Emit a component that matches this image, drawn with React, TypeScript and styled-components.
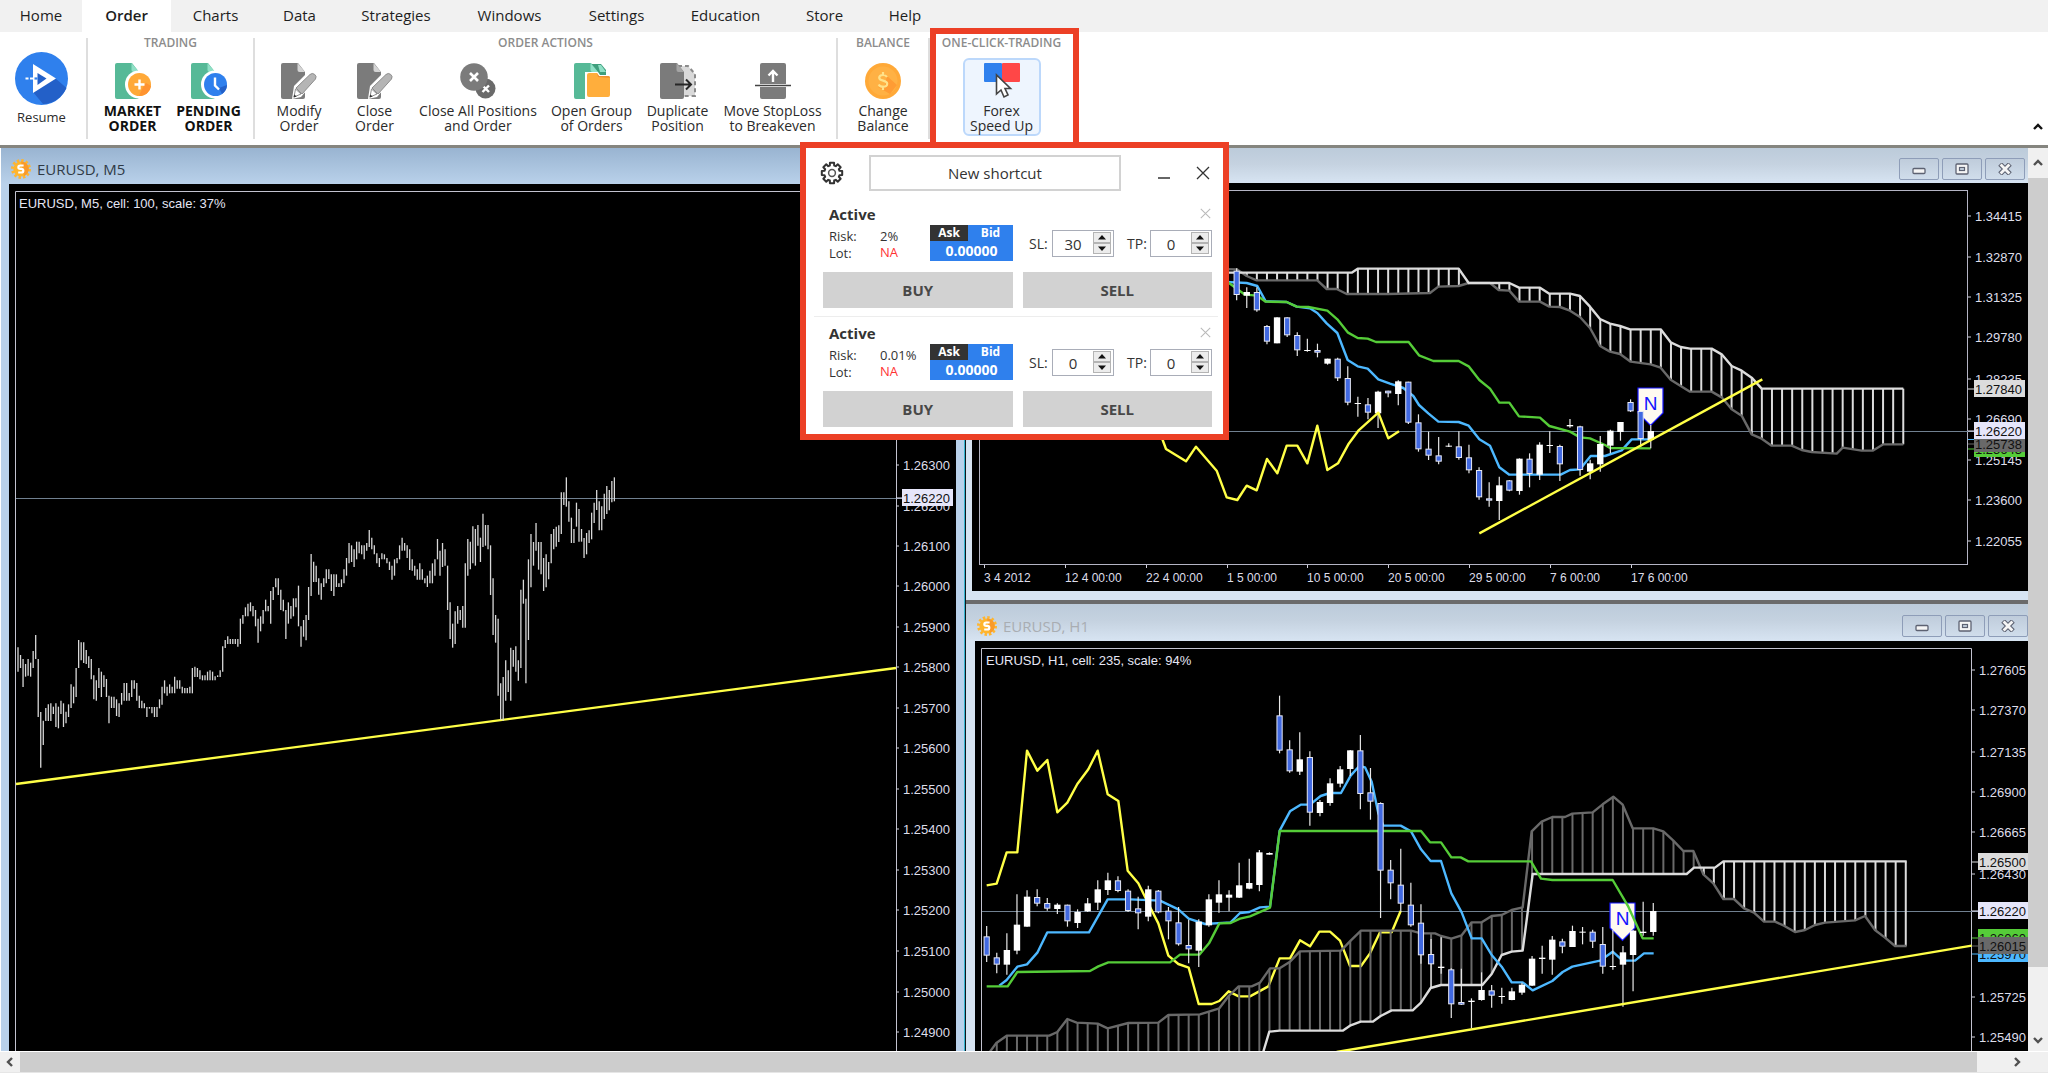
import React from "react";
import styled, { createGlobalStyle, css } from "styled-components";

const UI_FONT = '"Open Sans", "Noto Sans", sans-serif';
const CHART_FONT = '"Liberation Sans", Arial, sans-serif';
const RED = "#ec4026";

const GlobalStyle = createGlobalStyle`
  *, *::before, *::after { box-sizing: border-box; }
  html, body, #root { height: 100%; }
  body { margin: 0; overflow: hidden; background: #fff; font-family: ${UI_FONT}; color: #1e1e1e; }
  button, input { font-family: inherit; }
  button { margin: 0; padding: 0; border: 0; background: none; color: inherit; cursor: pointer; }
`;

/* ---------- shell ---------- */

const Shell = styled.div`
  position: relative;
  display: flex;
  flex-direction: column;
  height: 100vh;
  min-height: 600px;
`;

const TabBar = styled.nav`
  display: flex;
  flex: none;
  height: 32px;
  background: #f1f1f1;
`;

const Tab = styled.a<{ $width: number; $active?: boolean }>`
  flex: none;
  width: ${(p) => p.$width}px;
  line-height: 31px;
  text-align: center;
  font-size: 15px;
  font-weight: ${(p) => (p.$active ? 600 : 400)};
  background: ${(p) => (p.$active ? "#fff" : "transparent")};
  color: #1e1e1e;
  text-decoration: none;
`;

const Ribbon = styled.div`
  display: flex;
  flex: none;
  height: 116px;
  background: #fff;
  border-bottom: 3px solid #85857f;
`;

const Separator = styled.div`
  flex: none;
  width: 2px;
  margin: 6px 0;
  background: #dedede;
`;

const Group = styled.section<{ $width: number }>`
  position: relative;
  flex: none;
  display: flex;
  flex-direction: column;
  width: ${(p) => p.$width}px;
`;

const GroupTitle = styled.h2`
  margin: 0;
  height: 26px;
  padding-top: 2px;
  line-height: 17px;
  text-align: center;
  font-size: 12px;
  font-weight: 600;
  color: #8c8c8c;
  white-space: nowrap;
`;

const GroupBody = styled.div`
  display: flex;
  justify-content: center;
`;

const Tool = styled.button<{ $width: number; $bold?: boolean; $selected?: boolean }>`
  display: flex;
  flex-direction: column;
  align-items: center;
  gap: 4px;
  width: ${(p) => p.$width}px;
  height: 78px;
  padding-top: 4px;
  border: 1px solid transparent;
  font-size: 14px;
  font-weight: ${(p) => (p.$bold ? 700 : 400)};
  line-height: 15px;
  white-space: pre;
  color: ${(p) => (p.$bold ? "#111" : "#2b2b2b")};
  ${(p) =>
    p.$selected &&
    css`
      background: #eef5fe;
      border: 2px solid #bcd8fb;
      border-radius: 6px;
      padding-top: 3px;
    `}
`;

const ResumeTool = styled.button`
  display: flex;
  flex-direction: column;
  align-items: center;
  gap: 4px;
  width: 83px;
  padding-top: 20px;
  font-size: 13px;
  line-height: 17px;
  color: #2b2b2b;
`;

const ToolFrame = styled.div`
  position: absolute;
  inset: -4px -6px -3px 0;
  border: 6px solid ${RED};
  pointer-events: none;
`;

const RibbonEnd = styled.div`
  flex: 1;
  display: flex;
  justify-content: flex-end;
  align-items: flex-end;
  padding: 0 4px 12px 0;
`;

/* ---------- workspace ---------- */

const Workspace = styled.main`
  flex: 1;
  min-height: 0;
  display: grid;
  grid-template-columns: minmax(0, 966fr) minmax(0, 1062fr) 20px;
  grid-template-rows: minmax(0, 1fr) 21px;
  background: #f0f0f0;
`;

const RightStack = styled.div`
  display: grid;
  grid-template-rows: minmax(0, 456fr) minmax(0, 447fr);
  min-width: 0;
`;

const MdiWindow = styled.section<{ $kind: "active" | "top" | "bottom" }>`
  display: flex;
  flex-direction: column;
  min-width: 0;
  min-height: 0;
  background: ${(p) => (p.$kind === "active" ? "#b9d1ea" : "#d7e4f2")};
  ${(p) =>
    p.$kind === "active" &&
    css`
      border-left: 1px solid #fff;
      border-right: 1px solid #10181c;
      box-shadow: inset -1px 0 #35b4cf;
      padding-right: 9px;
      padding-left: 8px;
    `}
  ${(p) =>
    p.$kind === "top" &&
    css`
      border-bottom: 4px solid #6b6b6b;
      padding: 0 0 9px 6px;
    `}
  ${(p) =>
    p.$kind === "bottom" &&
    css`
      padding-left: 9px;
    `}
`;

const TITLE_INSETS = {
  active: { margin: "0 -8px 0 -8px", padding: "6px 12px 0 10px" },
  top: { margin: "0 0 0 -6px", padding: "6px 3px 0 11px" },
  bottom: { margin: "0 0 0 -9px", padding: "6px 0 0 11px" },
};

const TitleBar = styled.header<{ $kind: "active" | "top" | "bottom"; $height: number }>`
  flex: none;
  display: flex;
  align-items: center;
  gap: 6px;
  height: ${(p) => p.$height}px;
  margin: ${(p) => TITLE_INSETS[p.$kind].margin};
  padding: ${(p) => TITLE_INSETS[p.$kind].padding};
  background: ${(p) =>
    p.$kind === "active"
      ? "linear-gradient(#99b4d1, #b9d1ea)"
      : "linear-gradient(#bccbda, #c5d2e0 45%, #d7e4f2)"};
  font-size: 15px;
  line-height: 20px;
  color: ${(p) => (p.$kind === "active" ? "#2f3a46" : "#a9adb2")};
`;

const Caption = styled.h3`
  flex: 1;
  margin: 0;
  font: inherit;
  white-space: nowrap;
`;

const CaptionButtons = styled.div`
  display: flex;
  gap: 3px;
`;

const CaptionButton = styled.button`
  display: grid;
  place-items: center;
  width: 40px;
  height: 22px;
  border: 1px solid #8e9db8;
  border-radius: 2px;
  background: linear-gradient(#bfccdb, #d0ddeb);
`;

const ChartArea = styled.div`
  flex: 1;
  min-height: 0;
  background: #000;
  overflow: hidden;

  svg {
    display: block;
    width: 100%;
    height: 100%;
  }
`;

const ScrollColumn = styled.div`
  display: flex;
  flex-direction: column;
  background: #f0f0f0;
`;

const ScrollRow = styled.div`
  grid-column: 1 / -1;
  display: flex;
  background: #f0f0f0;
  border-top: 1px solid #fff;
`;

const ScrollButton = styled.button<{ $w: number; $h: number }>`
  flex: none;
  display: grid;
  place-items: center;
  width: ${(p) => p.$w}px;
  height: ${(p) => p.$h}px;
`;

const Thumb = styled.div<{ $grow: number }>`
  flex: ${(p) => p.$grow} 1 0;
  background: #cdcdcd;
`;

const Track = styled.div<{ $grow: number }>`
  flex: ${(p) => p.$grow} 1 0;
`;

const StatusStrip = styled.footer`
  flex: none;
  height: 4px;
  background: #fff;
  border-top: 1px solid #e6e6e6;
`;

/* ---------- one click panel ---------- */

const Panel = styled.aside`
  position: absolute;
  left: 800px;
  top: 142px;
  width: 429px;
  border: 6px solid ${RED};
  background: #fff;
  color: #333;
`;

const PanelHead = styled.div`
  display: flex;
  align-items: center;
  height: 49px;
  padding: 0 13px 0 14px;
`;

const IconButton = styled.button<{ $size: number }>`
  display: grid;
  place-items: center;
  width: ${(p) => p.$size}px;
  height: ${(p) => p.$size}px;
`;

const NewShortcut = styled.button`
  width: 252px;
  height: 36px;
  margin: 0 36px 0 25px;
  border: 2px solid #d2d2d2;
  font-size: 15px;
`;

const HeadSpacer = styled.div`
  flex: 1;
`;

const Shortcut = styled.section`
  height: 119px;
  padding: 6px 11px 0 17px;

  & + & {
    position: relative;
    height: 118px;
  }
  & + &::before {
    content: "";
    position: absolute;
    inset: 0 5px auto 8px;
    border-top: 1px solid #ededed;
  }
`;

const ShortcutHead = styled.div`
  display: flex;
  justify-content: space-between;
  height: 22px;
  padding-left: 6px;
`;

const RemoveButton = styled(IconButton)`
  margin-top: 4px;
`;

const ShortcutName = styled.h4`
  margin: 0;
  font-size: 15px;
  font-weight: 700;
  line-height: 22px;
`;

const ShortcutInfo = styled.div`
  display: flex;
  height: 36px;
  padding-left: 6px;
`;

const Facts = styled.dl`
  display: grid;
  grid-template-columns: 51px 50px;
  grid-template-rows: 17px 17px;
  margin: 3px 0 0;
  font-size: 13px;
  line-height: 17px;

  dt,
  dd {
    margin: 0;
    white-space: nowrap;
  }
`;

const Missing = styled.dd`
  color: #f33;
  line-height: 14px;
`;

const Quote = styled.div`
  display: grid;
  grid-template-columns: 38px 45px;
  grid-template-rows: 16px 20px;
  width: 83px;
  height: 36px;
  margin-right: 3px;
  background: #2f80ed;
  color: #fff;
  text-align: center;
  font-weight: 700;
`;

const QuoteSide = styled.button<{ $dark?: boolean }>`
  font-size: 12px;
  font-weight: 700;
  line-height: 16px;
  background: ${(p) => (p.$dark ? "#333" : "transparent")};
`;

const QuotePrice = styled.output`
  grid-column: 1 / -1;
  font-size: 14px;
  line-height: 19px;
`;

const Field = styled.div`
  display: flex;
  align-items: center;
  gap: 2px;
  margin-left: 13px;
  padding: 5px 0 4px;
`;

const FieldLabel = styled.label`
  width: 21px;
  font-size: 14px;
  white-space: nowrap;
`;

const Stepper = styled.div`
  display: flex;
  width: 62px;
  height: 27px;
  padding: 1px 2px 1px 0;
  border: 1px solid #a9adb8;
`;

const StepInput = styled.input`
  flex: 1;
  min-width: 0;
  padding: 0;
  border: 0;
  outline: 0;
  text-align: center;
  font-size: 15px;
  color: #333;
`;

const StepButtons = styled.div`
  display: grid;
  grid-template-rows: 1fr 1fr;
  width: 18px;
  height: 22px;
`;

const StepButton = styled.button`
  display: grid;
  place-items: center;
  border: 1px solid #b4b4b4;
  background: #ececec;
`;

const TradeRow = styled.div`
  display: grid;
  grid-template-columns: 1fr 1fr;
  gap: 10px;
  margin-top: 11px;
`;

const TradeButton = styled.button`
  height: 36px;
  background: #d2d2d2;
  font-size: 15px;
  font-weight: 700;
  color: #484848;
`;

/* ---------- icons ---------- */

const PlayIcon = () => (
  <svg width="53" height="53" viewBox="0 0 53 53">
    <circle cx="26.500" cy="26.500" r="26.500" fill="#2f80ed" />
    <path d="M18 40 L28 52 A26.500 26.500 0 0 0 51.500 36 L40 26Z" fill="#2360c8" />
    <path d="M18 12 L41 26.500 L18 41Z" fill="#fff" />
    <path d="M22.500 21 L31.500 26.500 L22.500 33Z" fill="#2360c8" />
    <path d="M10.500 26.500h3M15 26.500h3" stroke="#fff" strokeWidth="2.200" />
    <path d="M19.500 26.500h3" stroke="#2f80ed" strokeWidth="2.200" />
  </svg>
);

const DocBase = ({ fill, fold }: { fill: string; fold: string }) => (
  <>
    <path d="M2 0h15l7 9v25a2 2 0 0 1-2 2H2a2 2 0 0 1-2-2V2a2 2 0 0 1 2-2Z" fill={fill} />
    <path d="M16.500 0v7a2 2 0 0 0 2 2H24Z" fill={fold} />
  </>
);

const MarketIcon = () => (
  <svg width="36" height="36" viewBox="0 0 36 36">
    <DocBase fill="#56b997" fold="#8fe0c6" />
    <circle cx="24" cy="21.500" r="14" fill="#fff" />
    <circle cx="24.500" cy="21.500" r="11.500" fill="#ffa938" />
    <path d="M28 24l-4 9a11.500 11.500 0 0 0 12-10l-5-3Z" fill="#ff9330" />
    <path d="M24.500 16.500v10M19.500 21.500h10" stroke="#fff" strokeWidth="2.400" />
  </svg>
);

const PendingIcon = () => (
  <svg width="36" height="36" viewBox="0 0 36 36">
    <DocBase fill="#56b997" fold="#8fe0c6" />
    <circle cx="24" cy="21.500" r="14" fill="#fff" />
    <circle cx="24.500" cy="21.500" r="11.500" fill="#2f80ed" />
    <path d="M28 25l3 6a11.500 11.500 0 0 0 5-9Z" fill="#2360c8" />
    <path d="M24 14.500v8l4 4" stroke="#fff" strokeWidth="2.400" fill="none" />
  </svg>
);

const EditIcon = () => (
  <svg width="36" height="36" viewBox="0 0 36 36">
    <DocBase fill="#7b7b7b" fold="#d4d4d4" />
    <path d="M11 36l2-13 15-15 8 7-16 19Z" fill="#fff" />
    <path d="M15 25L29 11.500a3.600 3.600 0 0 1 5.500 4.500L21 31Z" fill="#b5b5b5" stroke="#8d8d8d" />
    <path d="M14.500 26l5.500 5-7 3Z" fill="#fff" stroke="#8d8d8d" />
    <path d="M12.500 34.500l.8-3 2.400 2Z" fill="#333" />
  </svg>
);

const CloseAllIcon = () => (
  <svg width="36" height="36" viewBox="0 0 36 36">
    <circle cx="25.500" cy="25.500" r="10" fill="#6a6a6a" />
    <path d="M22.500 22.500l6.500 6.500M29 22.500l-6.500 6.500" stroke="#fff" strokeWidth="2.400" />
    <circle cx="14" cy="14" r="13.800" fill="#7b7b7b" />
    <path d="M10 10l8 8M18 10l-8 8" stroke="#fff" strokeWidth="2.600" />
  </svg>
);

const GroupIcon = () => (
  <svg width="36" height="36" viewBox="0 0 36 36">
    <path d="M18 1h9l5 6v7H18Z" fill="#3f9f7d" />
    <DocBase fill="#56b997" fold="#8fe0c6" />
    <path d="M24 2h3l5 7h-6Z" fill="#8fe0c6" />
    <path d="M11 36V9h13l2 3h10v24Z" fill="#fff" />
    <path d="M13 12a2 2 0 0 1 2-2h8l2 3h9a2 2 0 0 1 2 2v17a2 2 0 0 1-2 2H15a2 2 0 0 1-2-2Z" fill="#ffae3c" />
    <path d="M23 10l2 3h9a2 2 0 0 1 2 2l-12-1Z" fill="#ef9130" />
  </svg>
);

const DuplicateIcon = () => (
  <svg width="36" height="36" viewBox="0 0 36 36">
    <path d="M18 3h10l7 8v22H18Z" fill="#d9d9d9" stroke="#8b8b8b" strokeWidth="2" strokeDasharray="4 3" />
    <DocBase fill="#7b7b7b" fold="#a5a5a5" />
    <path d="M15 21.500h15M26 16.500l5 5-5 5" stroke="#262626" strokeWidth="2" fill="none" />
  </svg>
);

const BreakevenIcon = () => (
  <svg width="36" height="36" viewBox="0 0 36 36">
    <rect x="5" y="0" width="26" height="36" rx="2" fill="#7b7b7b" />
    <path d="M3 22.500h30" stroke="#fff" strokeWidth="3" />
    <path d="M0 22.500h36" stroke="#444" strokeWidth="1.500" />
    <path d="M18 19V8M13.500 12.500L18 8l4.500 4.500" stroke="#fff" strokeWidth="2.400" fill="none" />
  </svg>
);

const CoinIcon = () => (
  <svg width="36" height="36" viewBox="0 0 36 36">
    <circle cx="18" cy="18" r="18" fill="#ffa938" />
    <circle cx="18" cy="18" r="14.500" fill="#ffb144" />
    <path d="M22 13l10 9-7 9-12-7 7-2Z" fill="#ff9c34" />
    <path
      d="M22 14c-.8-1.300-2.200-2-4-2-2.200 0-3.800 1-3.800 2.700 0 3.900 8 1.900 8 6 0 2-1.800 3-4.200 3-2 0-3.500-.8-4.300-2.300M18 9v3M18 24v3"
      stroke="#ffe28a"
      strokeWidth="2.200"
      fill="none"
    />
  </svg>
);

const SpeedIcon = () => (
  <svg width="36" height="36" viewBox="0 0 36 36">
    <rect width="18" height="19" rx="1" fill="#2f80ed" />
    <rect x="18" width="18" height="19" rx="1" fill="#ff4747" />
    <path d="M12.500 12v19l4.500-4 3 7 4-2-3-6.500h5.500Z" fill="#fff" stroke="#444" strokeWidth="1.600" />
  </svg>
);

const SunIcon = () => (
  <svg width="20" height="20" viewBox="0 0 20 20" aria-hidden="true">
    <circle cx="10" cy="10" r="8.500" fill="none" stroke="#ffb52e" strokeWidth="3" strokeDasharray="2.400 2.050" />
    <circle cx="10" cy="10" r="7.600" fill="#ffb52e" />
    <path d="M10 2.500a7.500 7.500 0 0 1 3 14.500Z" fill="#f99a2b" />
    <path
      d="M12.600 6.500H9.300c-2.600 0-2.600 3.300 0 3.300h1c2.700 0 2.700 3.700 0 3.700H7.200"
      stroke="#fff"
      strokeWidth="2.200"
      fill="none"
    />
  </svg>
);

const GearIcon = () => {
  const points: string[] = [];
  for (let i = 0; i < 8; i++) {
    const a = (i * Math.PI) / 4;
    [
      [-0.28, 7.8],
      [-0.2, 10.4],
      [0.2, 10.4],
      [0.28, 7.8],
    ].forEach(([d, r]) => points.push(`${12 + r * Math.sin(a + d)},${12 - r * Math.cos(a + d)}`));
  }
  return (
    <svg width="24" height="24" viewBox="0 0 24 24">
      <polygon points={points.join(" ")} fill="none" stroke="#333" strokeWidth="2" strokeLinejoin="round" />
      <circle cx="12" cy="12" r="3.400" fill="none" stroke="#555" strokeWidth="1.500" />
    </svg>
  );
};

const CrossIcon = ({ size, color }: { size: number; color: string }) => (
  <svg width={size} height={size} viewBox="0 0 14 14">
    <path d="M1 1l12 12M13 1L1 13" stroke={color} strokeWidth="1.300" />
  </svg>
);

const Chevron = ({ turn, color = "#505050" }: { turn: number; color?: string }) => (
  <svg width="12" height="12" viewBox="0 0 12 12">
    <path d="M2 8l4-4 4 4" fill="none" stroke={color} strokeWidth="2.400" transform={`rotate(${turn} 6 6)`} />
  </svg>
);

const MinimizeGlyph = () => (
  <svg width="14" height="12" viewBox="0 0 14 12">
    <rect x="1" y="5.500" width="12" height="5" rx="1" fill="#f5f5f5" stroke="#5d6272" strokeWidth="1.300" />
  </svg>
);

const MaximizeGlyph = () => (
  <svg width="14" height="12" viewBox="0 0 14 12">
    <rect x="1" y="1" width="12" height="10" rx="1" fill="#f5f5f5" stroke="#5d6272" strokeWidth="1.300" />
    <rect x="4.500" y="4.500" width="5" height="3" fill="#c8d4e2" stroke="#5d6272" strokeWidth="1.200" />
  </svg>
);

const CloseGlyph = () => (
  <svg width="14" height="12" viewBox="0 0 14 12">
    <path d="M2 1l10 10M12 1L2 11" stroke="#5d6272" strokeWidth="5" />
    <path d="M2.600 1.600l8.800 8.800M11.400 1.600l-8.800 8.800" stroke="#f5f5f5" strokeWidth="2.800" />
  </svg>
);

/* ---------- chart drawing ---------- */

type Pt = [number, number];
type Candle = [number, number, number, number, 0 | 1];

// Series are stored at three units to the pixel.
const U = 3;
const STEP = 30.3;

const pair = (flat: number[]): Pt[] => {
  const out: Pt[] = [];
  for (let i = 0; i < flat.length; i += 2) out.push([flat[i], flat[i + 1]]);
  return out;
};

const valueAt = (line: Pt[], x: number): number | null => {
  for (let i = 1; i < line.length; i++) {
    const [x0, y0] = line[i - 1];
    const [x1, y1] = line[i];
    if (x >= x0 && x <= x1) return y0 + ((y1 - y0) * (x - x0)) / (x1 - x0 || 1);
  }
  return null;
};

const Line = ({ data, color, width = 2.4 }: { data: Pt[]; color: string; width?: number }) => (
  <polyline
    points={data.map(([x, y]) => `${x / U},${y / U}`).join(" ")}
    fill="none"
    stroke={color}
    strokeWidth={width}
    strokeLinejoin="round"
  />
);

const Candles = ({ data, start }: { data: Candle[]; start: number }) => (
  <>
    {data.map(([hi, top, bottom, lo, up], i) => {
      const x = (start + i * STEP) / U;
      const h = Math.max((bottom - top) / U, 1);
      return (
        <g key={i}>
          <path d={`M${x} ${hi / U}V${lo / U}`} stroke="#e8e8e8" strokeWidth="1.200" />
          {up ? (
            <rect x={x - 3.200} y={top / U} width="6.400" height={h} fill="#fff" />
          ) : (
            <rect
              x={x - 2.600}
              y={top / U + 0.5}
              width="5.200"
              height={Math.max(h - 1, 1)}
              fill="#4169e1"
              stroke="#e6e8f4"
              strokeWidth="1"
            />
          )}
        </g>
      );
    })}
  </>
);

const LIGHT = "#dcdcdc";
const GREY = "#696969";
const BLUE = "#4db8ff";
const GREEN = "#55cc38";
const YELLOW = "#ffff46";

const Cloud = ({ light, grey, start, count, floor }: { light: Pt[]; grey: Pt[]; start: number; count: number; floor: number }) => (
  <>
    {Array.from({ length: count }, (_, i) => {
      const x = start + i * STEP;
      const g = valueAt(grey, x);
      if (g === null) return null;
      const l = valueAt(light, x) ?? floor;
      return (
        <path key={i} d={`M${x / U} ${l / U}V${g / U}`} stroke={l < g ? LIGHT : GREY} strokeWidth="2" />
      );
    })}
    <Line data={grey} color={GREY} />
    <Line data={light} color={LIGHT} />
  </>
);

const Marker = ({ x, y }: { x: number; y: number }) => (
  <g>
    <path d={`M${x} ${y}h25v25l-12.500 12.500L${x} ${y + 25}Z`} fill="#fffaf0" stroke="#1414ff" strokeWidth="1.200" />
    <text x={x + 12.5} y={y + 22} textAnchor="middle" fontFamily={CHART_FONT} fontSize="19" fill="#1414ff">
      N
    </text>
  </g>
);

const ScaleLabels = ({ axis, items }: { axis: number; items: [number, string][] }) => (
  <>
    {items.map(([y, label]) => (
      <g key={y}>
        <path d={`M${axis} ${y}h3`} stroke="#d0d0dc" />
        <text x={axis + 7} y={y + 5} fontFamily={CHART_FONT} fontSize="13" fill="#dedeea">
          {label}
        </text>
      </g>
    ))}
  </>
);

const Tag = ({ axis, y, label, bg }: { axis: number; y: number; label: string; bg: string }) => (
  <g>
    <path d={`M${axis} ${y}h7`} stroke={bg} />
    <rect x={axis + 6} y={y - 9} width="51" height="17" fill={bg} />
    <text x={axis + 7} y={y + 5} fontFamily={CHART_FONT} fontSize="13" fill="#111">
      {label}
    </text>
  </g>
);

const M5_BARS = pair([
  622,695,645,684,657,741,672,710,657,707,668,710,633,684,585,657,657,831,816,983,842,915,804,843,793,843,790,843,
  800,822,790,861,800,865,782,822,790,861,815,850,793,831,733,804,740,790,684,771,600,684,607,661,607,669,630,672,
  649,684,657,718,706,778,721,782,684,744,695,771,706,741,717,771,767,850,770,804,770,804,778,828,790,831,759,794,
  729,782,729,782,759,782,721,771,721,746,729,782,767,804,782,805,790,805,801,831,801,806,801,820,801,831,801,831,
  778,805,740,794,721,760,740,767,733,760,740,760,710,760,721,746,721,746,740,760,744,760,744,760,740,760,684,760,
  680,711,684,711,691,718,706,721,706,721,695,721,691,721,695,721,709,721,706,711,691,711,619,695,600,624,589,612,
  597,612,597,612,597,612,597,620,536,612,525,551,502,529,491,529,487,514,498,529,510,559,536,608,529,574,510,551,
  479,514,498,514,453,551,441,480,415,442,415,465,449,510,479,514,510,597,487,551,498,536,475,529,475,502,437,559,
  559,620,540,590,525,601,441,540,342,468,365,426,377,426,415,464,430,479,415,441,388,430,388,417,403,453,403,468,
  403,441,430,441,418,441,388,430,354,407,309,370,316,366,328,381,305,358,305,340,316,343,316,358,309,332,270,321,
  293,328,316,343,340,370,354,381,340,358,343,358,354,370,365,390,377,419,358,407,354,370,316,358,293,332,309,332,
  316,354,328,390,358,392,377,407,388,419,370,419,388,419,415,430,407,441,392,430,370,430,358,407,297,358,332,407,
  309,381,328,377,377,510,487,597,551,623,514,612,498,551,510,540,498,563,370,563,297,407,305,388,259,370,267,377,
  255,317,293,366,221,321,255,317,255,328,316,465,415,585,525,608,536,767,730,840,711,842,661,782,691,756,623,782,
  630,680,619,695,661,722,449,684,419,491,476,730,358,600,282,442,306,377,249,332,306,389,306,403,354,453,343,442,
  366,418,282,370,267,328,260,320,256,306,157,282,157,195,112,200,184,245,233,309,267,309,188,260,207,305,267,305,
  294,354,279,343,271,309,218,298,188,249,150,210,184,271,199,271,161,237,138,222,150,211,123,187,112,184,
]);

const PriceLine = ({ x1, x2, y }: { x1: number; x2: number; y: number }) => (
  <path d={`M${x1} ${y}H${x2}`} stroke="#708090" strokeWidth="1" />
);

const M5Chart = () => (
  <svg role="img" aria-label="EURUSD, M5 chart">
    <g transform="translate(-9 -184)">
      <path d="M15.500 1100V191.500H896.500V1100" fill="none" stroke="#c3c3d0" />
      <text x="19" y="208" fontFamily={CHART_FONT} fontSize="13" fill="#e6e6f4">
        EURUSD, M5, cell: 100, scale: 37%
      </text>
      <PriceLine x1={16} x2={902} y={498.5} />
      <path d="M16 784L896 668" stroke={YELLOW} strokeWidth="2.400" />
      {M5_BARS.map(([top, bottom], i) => (
        <path
          key={i}
          d={`M${18 + i * 2.527} ${440 + top / U}V${440 + bottom / U}`}
          stroke="#d8d8d8"
          strokeWidth="1.300"
        />
      ))}
      <ScaleLabels
        axis={896}
        items={[
          [465, "1.26300"], [506, "1.26200"], [546, "1.26100"], [586, "1.26000"], [627, "1.25900"],
          [667, "1.25800"], [708, "1.25700"], [748, "1.25600"], [789, "1.25500"], [829, "1.25400"],
          [870, "1.25300"], [910, "1.25200"], [951, "1.25100"], [992, "1.25000"], [1032, "1.24900"],
        ]}
      />
      <Tag axis={896} y={498} label="1.26220" bg="#e6e6fa" />
    </g>
  </svg>
);

const TOP_CANDLES: Candle[] = [
  [415,422,495,511,0],[472,486,497,534,1],[472,486,541,545,0],[585,588,635,643,0],[562,562,640,640,1],[562,562,616,621,0],
  [607,615,661,678,0],[626,660,663,665,1],[641,660,668,682,0],[686,686,701,704,1],[683,686,745,753,0],[709,744,818,826,0],
  [800,819,822,860,1],[804,823,848,868,0],[782,785,850,894,1],[782,782,790,802,0],[751,754,792,826,1],[755,755,878,882,0],
  [853,877,958,965,0],[905,956,977,990,0],[921,976,995,1003,0],[940,947,950,951,1],[904,949,984,989,0],[944,982,1021,1030,0],
  [1012,1020,1102,1109,0],[1057,1105,1112,1130,0],[1040,1066,1113,1170,1],[1050,1051,1082,1084,0],[985,986,1083,1094,1],
  [970,986,1032,1072,0],[937,944,1034,1050,1],[904,945,948,969,1],[944,948,1003,1053,0],[867,885,889,893,1],
  [887,889,1020,1037,0],[989,1000,1025,1048,1],[918,942,1003,1025,1],[899,902,947,970,1],[876,876,906,932,1],
  [808,816,844,846,0],[843,843,927,950,0],[885,903,930,955,1],
];

const TOP_LIGHT = pair([
  -60,428,395,428,413,416,716,416,746,459,868,459,897,473,960,473,988,491,1050,491,1080,498,1110,530,1140,567,1170,581,
  1200,588,1230,598,1322,598,1352,637,1382,651,1410,656,1475,656,1505,673,1535,708,1565,722,1595,743,1625,776,2050,776,
]);
const TOP_GREY = pair([
  -60,416,50,418,80,438,110,451,292,451,320,477,350,477,380,492,505,492,630,489,655,470,716,468,746,459,810,459,836,480,
  868,482,897,515,960,515,988,530,1020,531,1050,542,1080,561,1110,594,1140,648,1170,665,1200,672,1232,695,1292,703,
  1322,713,1352,749,1382,768,1410,785,1475,785,1505,802,1535,838,1565,857,1595,913,1625,926,1655,947,1715,947,1745,960,
  1775,966,1850,971,1868,953,1925,962,1958,962,1990,943,2050,943,
]);
const TOP_BLUE = pair([
  0,455,80,459,112,468,137,514,200,516,230,530,270,535,292,549,320,580,352,609,383,690,413,709,443,716,475,748,510,761,
  550,774,580,798,597,825,625,850,655,875,716,876,746,887,778,928,810,947,838,1012,868,1034,1022,1034,1050,1020,
  1080,1018,1112,978,1155,978,1205,961,1235,928,1285,928,
]);
const TOP_GREEN = pair([
  0,445,28,460,75,494,112,497,137,515,200,516,230,530,265,531,322,542,352,568,383,607,413,624,443,626,468,636,566,636,
  597,676,640,693,716,693,746,709,778,750,810,776,838,818,868,818,897,859,960,863,988,888,1050,905,1080,922,1110,925,
  1155,945,1170,954,1292,955,
]);
const TOP_YELLOW = pair([
  -182,900,-172,930,-162,957,-102,994,-72,950,-10,1022,20,1102,52,1110,80,1067,110,1081,141,987,172,1030,200,947,232,947,
  262,1000,292,887,322,1020,354,1000,385,943,415,902,475,848,505,925,537,904,
]);

const DATES = ["3 4 2012", "12 4 00:00", "22 4 00:00", "1 5 00:00", "10 5 00:00", "20 5 00:00", "29 5 00:00", "7 6 00:00", "17 6 00:00"];

const TopChart = () => (
  <svg role="img" aria-label="EURUSD chart">
    <g transform="translate(-972 -183)">
      <rect x="979.500" y="190.500" width="988" height="374" fill="none" stroke="#b4b4c4" />
      <PriceLine x1={980} x2={1974} y={431.5} />
      <g transform="translate(1220 130)">
        <Cloud light={TOP_LIGHT} grey={TOP_GREY} start={50} count={67} floor={1300} />
        <Line data={TOP_BLUE} color={BLUE} />
        <Line data={TOP_GREEN} color={GREEN} />
      </g>
      <Marker x={1638} y={388} />
      <g transform="translate(1220 130)">
        <Candles data={TOP_CANDLES} start={50} />
        <Line data={TOP_YELLOW} color={YELLOW} />
        <Line data={pair([778, 1210, 1627, 748])} color={YELLOW} />
      </g>
      {DATES.map((d, i) => {
        const x = Math.round(984 + i * 80.85);
        return (
          <g key={d}>
            <path d={`M${x + 0.5} 565v3`} stroke="#d0d0dc" />
            <text x={x} y="582" fontFamily={CHART_FONT} fontSize="12" fill="#dedeea">
              {d}
            </text>
          </g>
        );
      })}
      <ScaleLabels
        axis={1968}
        items={[
          [216, "1.34415"], [257, "1.32870"], [297, "1.31325"], [337, "1.29780"], [379, "1.28235"],
          [419, "1.26690"], [460, "1.25145"], [500, "1.23600"], [541, "1.22055"],
        ]}
      />
      <path d="M1968 439.500h6" stroke={BLUE} />
      <Tag axis={1968} y={449} label="1.25643" bg={GREEN} />
      <Tag axis={1968} y={444} label="1.25738" bg={GREY} />
      <Tag axis={1968} y={431} label="1.26220" bg="#e6e6fa" />
      <Tag axis={1968} y={389} label="1.27840" bg={LIGHT} />
    </g>
  </svg>
);

const H1_CANDLES: Candle[] = [
  [1098,1129,1187,1206,0],[1178,1192,1214,1240,0],[1120,1170,1214,1244,1],[1003,1094,1172,1183,1],[991,1010,1100,1100,1],
  [988,1011,1031,1039,0],[1014,1029,1046,1052,0],[1030,1034,1047,1062,1],[1034,1034,1084,1100,0],[1048,1056,1089,1104,1],
  [1014,1030,1054,1056,1],[961,988,1028,1050,1],[938,961,990,1005,1],[949,961,993,997,0],[988,992,1053,1056,0],
  [1010,1045,1060,1108,0],[977,988,1070,1084,1],[990,992,1057,1060,0],[1041,1052,1084,1138,0],[1041,1087,1153,1157,0],
  [1079,1155,1168,1210,0],[1078,1085,1172,1221,1],[1003,1018,1096,1100,1],[961,1003,1028,1058,1],[991,1004,1013,1054,1],
  [908,976,1013,1014,1],[896,969,986,988,1],[870,877,975,994,1],[877,879,884,884,1],[407,466,572,580,0],
  [541,568,634,638,0],[517,598,635,645,1],[574,591,758,797,0],[720,726,759,769,1],[655,670,729,737,1],[618,628,671,682,1],
  [570,571,627,648,1],[525,571,702,748,0],[624,697,725,779,0],[727,729,932,1074,0],[900,929,970,1018,0],
  [866,974,1031,1055,0],[968,1034,1096,1100,0],[1033,1088,1186,1211,0],[1137,1182,1213,1283,0],[1132,1220,1224,1241,1],
  [1225,1228,1333,1374,0],[1226,1326,1334,1335,0],[1315,1322,1326,1405,1],[1237,1290,1320,1322,1],[1275,1291,1307,1343,0],
  [1283,1308,1311,1331,1],[1283,1294,1320,1321,1],[1268,1274,1298,1304,1],[1188,1196,1277,1278,1],[1157,1193,1197,1241,1],
  [1128,1139,1199,1244,1],[1136,1144,1160,1180,0],[1097,1113,1161,1161,1],[1101,1115,1118,1153,1],[1109,1115,1145,1164,0],
  [1101,1152,1220,1241,0],[1110,1218,1221,1229,1],[1158,1177,1214,1340,1],[1110,1112,1185,1294,1],[1025,1115,1119,1127,1],
  [1029,1053,1116,1127,1],
];

const H1_GREY = pair([
  90,1475,108,1450,140,1427,268,1427,292,1416,322,1377,350,1388,413,1391,443,1405,505,1389,595,1388,625,1365,720,1363,
  778,1345,806,1308,836,1279,875,1279,900,1268,930,1225,959,1225,990,1205,1020,1174,1143,1172,1172,1142,1203,1112,
  1353,1112,1383,1120,1425,1120,1443,1128,1474,1136,1505,1126,1535,1087,1565,1087,1595,1068,1625,1065,1655,1050,
  1688,1042,1715,814,1745,785,1777,771,1815,771,1837,761,1898,757,1928,733,1960,710,1988,734,2018,805,2080,805,
  2110,814,2140,842,2170,873,2200,873,2230,943,2260,970,2290,1017,2322,1017,2352,1045,2382,1058,2412,1085,2445,1085,
  2472,1097,2505,1116,2535,1110,2565,1095,2595,1088,2685,1081,2715,1068,2745,1110,2775,1133,2805,1158,2840,1158,
]);
const H1_LIGHT = pair([
  910,1475,928,1415,959,1412,1148,1412,1170,1397,1202,1385,1238,1385,1262,1368,1295,1351,1358,1351,1383,1328,1412,1284,
  1443,1275,1567,1275,1595,1242,1625,1185,1655,1175,1688,1172,1718,942,2180,942,2202,923,2265,923,2290,904,2840,904,
]);
const H1_BLUE = pair([
  118,1277,140,1260,172,1220,201,1213,232,1178,262,1117,387,1117,443,1018,510,1018,600,1022,655,1048,686,1076,735,1092,
  812,1087,840,1059,868,1056,900,1042,930,1040,959,812,990,754,1022,734,1050,734,1082,708,1110,699,1143,699,1172,647,
  1198,618,1215,622,1235,665,1255,760,1270,797,1322,797,1353,814,1383,868,1412,903,1443,903,1474,1000,1505,1057,
  1535,1135,1565,1135,1595,1185,1625,1220,1655,1267,1688,1267,1718,1291,1777,1263,1808,1236,1837,1220,1920,1202,
  1958,1175,1988,1202,2025,1202,2052,1180,2081,1180,
]);
const H1_GREEN = pair([
  80,1279,143,1279,172,1236,390,1233,415,1219,445,1207,630,1207,660,1184,718,1184,747,1150,778,1090,812,1089,840,1076,
  870,1069,930,1043,959,813,1383,813,1410,847,1443,847,1474,892,1502,892,1525,904,1713,904,1743,956,1777,960,1958,960,
  2005,1040,2048,1135,2081,1135,
]);
const H1_YELLOW = pair([
  80,976,110,971,140,877,172,877,201,572,232,632,262,600,292,757,322,728,352,672,385,628,413,572,443,703,475,723,503,932,
  535,970,567,1035,595,1090,625,1187,655,1212,686,1223,716,1332,755,1332,778,1323,806,1294,836,1309,870,1309,925,1279,
  959,1195,990,1195,1020,1141,1050,1159,1078,1115,1110,1115,1140,1142,1170,1218,1203,1218,1230,1180,1260,1117,1295,1117,
  1322,1053,
]);

const H1Chart = () => (
  <svg role="img" aria-label="EURUSD, H1 chart">
    <g transform="translate(-975 -641)">
      <path d="M981.500 1100V648.500H1971.500V1100" fill="none" stroke="#c3c3d0" />
      <text x="986" y="665" fontFamily={CHART_FONT} fontSize="13" fill="#e6e6f4">
        EURUSD, H1, cell: 235, scale: 94%
      </text>
      <PriceLine x1={982} x2={1978} y={911.5} />
      <g transform="translate(960 560)">
        <Line data={H1_YELLOW} color={YELLOW} />
        <Cloud light={H1_LIGHT} grey={H1_GREY} start={80} count={92} floor={1500} />
        <Line data={H1_BLUE} color={BLUE} />
      </g>
      <Marker x={1610} y={903} />
      <g transform="translate(960 560)">
        <Line data={H1_GREEN} color={GREEN} />
        <Candles data={H1_CANDLES} start={80} />
        <Line data={pair([1130, 1476, 3035, 1157])} color={YELLOW} />
      </g>
      <ScaleLabels
        axis={1972}
        items={[
          [670, "1.27605"], [710, "1.27370"], [752, "1.27135"], [792, "1.26900"], [832, "1.26665"],
          [874, "1.26430"], [997, "1.25725"], [1037, "1.25490"],
        ]}
      />
      <Tag axis={1972} y={862} label="1.26500" bg={LIGHT} />
      <Tag axis={1972} y={911} label="1.26220" bg="#e6e6fa" />
      <Tag axis={1972} y={938} label="1.26060" bg={GREEN} />
      <Tag axis={1972} y={954} label="1.25970" bg={BLUE} />
      <Tag axis={1972} y={946} label="1.26015" bg={GREY} />
    </g>
  </svg>
);

/* ---------- page ---------- */

const TABS: [string, number][] = [
  ["Home", 82], ["Order", 89], ["Charts", 89], ["Data", 79], ["Strategies", 114], ["Windows", 113],
  ["Settings", 101], ["Education", 117], ["Store", 81], ["Help", 80],
];

const ACTIONS: [string, number, React.FC][] = [
  ["Modify\nOrder", 75, EditIcon],
  ["Close\nOrder", 76, EditIcon],
  ["Close All Positions\nand Order", 131, CloseAllIcon],
  ["Open Group\nof Orders", 96, GroupIcon],
  ["Duplicate\nPosition", 76, DuplicateIcon],
  ["Move StopLoss\nto Breakeven", 114, BreakevenIcon],
];

const WindowButtons = () => (
  <CaptionButtons>
    <CaptionButton aria-label="Minimize"><MinimizeGlyph /></CaptionButton>
    <CaptionButton aria-label="Maximize"><MaximizeGlyph /></CaptionButton>
    <CaptionButton aria-label="Close"><CloseGlyph /></CaptionButton>
  </CaptionButtons>
);

const StepField = ({ id, label, value }: { id: string; label: string; value: string }) => (
  <Field>
    <FieldLabel htmlFor={id}>{label}</FieldLabel>
    <Stepper>
      <StepInput id={id} defaultValue={value} inputMode="numeric" />
      <StepButtons>
        <StepButton aria-label="Increase">
          <svg width="8" height="5" viewBox="0 0 8 5"><path d="M4 0l4 4.500H0Z" fill="#111" /></svg>
        </StepButton>
        <StepButton aria-label="Decrease">
          <svg width="8" height="5" viewBox="0 0 8 5"><path d="M0 .5h8L4 5Z" fill="#111" /></svg>
        </StepButton>
      </StepButtons>
    </Stepper>
  </Field>
);

const ShortcutCard = ({ id, risk, sl, tp }: { id: string; risk: string; sl: string; tp: string }) => (
  <Shortcut>
    <ShortcutHead>
      <ShortcutName>Active</ShortcutName>
      <RemoveButton $size={13} aria-label="Remove shortcut"><CrossIcon size={11} color="#b9b9b9" /></RemoveButton>
    </ShortcutHead>
    <ShortcutInfo>
      <Facts>
        <dt>Risk:</dt>
        <dd>{risk}</dd>
        <dt>Lot:</dt>
        <Missing>NA</Missing>
      </Facts>
      <Quote>
        <QuoteSide $dark>Ask</QuoteSide>
        <QuoteSide>Bid</QuoteSide>
        <QuotePrice>0.00000</QuotePrice>
      </Quote>
      <StepField id={`${id}-sl`} label="SL:" value={sl} />
      <StepField id={`${id}-tp`} label="TP:" value={tp} />
    </ShortcutInfo>
    <TradeRow>
      <TradeButton>BUY</TradeButton>
      <TradeButton>SELL</TradeButton>
    </TradeRow>
  </Shortcut>
);

export default function App() {
  return (
    <Shell>
      <GlobalStyle />
      <TabBar>
        {TABS.map(([name, width]) => (
          <Tab key={name} href="#" $width={width} $active={name === "Order"}>
            {name}
          </Tab>
        ))}
      </TabBar>

      <Ribbon>
        <Group $width={86}>
          <ResumeTool><PlayIcon />Resume</ResumeTool>
        </Group>
        <Separator />
        <Group $width={165}>
          <GroupTitle>TRADING</GroupTitle>
          <GroupBody>
            <Tool $width={76} $bold><MarketIcon />{"MARKET\nORDER"}</Tool>
            <Tool $width={76} $bold><PendingIcon />{"PENDING\nORDER"}</Tool>
          </GroupBody>
        </Group>
        <Separator />
        <Group $width={581}>
          <GroupTitle>ORDER ACTIONS</GroupTitle>
          <GroupBody>
            {ACTIONS.map(([label, width, Icon]) => (
              <Tool key={label} $width={width}><Icon />{label}</Tool>
            ))}
          </GroupBody>
        </Group>
        <Separator />
        <Group $width={90}>
          <GroupTitle>BALANCE</GroupTitle>
          <GroupBody>
            <Tool $width={76}><CoinIcon />{"Change\nBalance"}</Tool>
          </GroupBody>
        </Group>
        <Separator />
        <Group $width={143}>
          <GroupTitle>ONE-CLICK-TRADING</GroupTitle>
          <GroupBody>
            <Tool $width={78} $selected><SpeedIcon />{"Forex\nSpeed Up"}</Tool>
          </GroupBody>
          <ToolFrame />
        </Group>
        <RibbonEnd>
          <IconButton $size={12} aria-label="Collapse ribbon"><Chevron turn={0} color="#111" /></IconButton>
        </RibbonEnd>
      </Ribbon>

      <Workspace>
        <MdiWindow $kind="active">
          <TitleBar $kind="active" $height={36}>
            <SunIcon />
            <Caption>EURUSD, M5</Caption>
          </TitleBar>
          <ChartArea><M5Chart /></ChartArea>
        </MdiWindow>
        <RightStack>
          <MdiWindow $kind="top">
            <TitleBar $kind="top" $height={35}>
              <Caption />
              <WindowButtons />
            </TitleBar>
            <ChartArea><TopChart /></ChartArea>
          </MdiWindow>
          <MdiWindow $kind="bottom">
            <TitleBar $kind="bottom" $height={37}>
              <SunIcon />
              <Caption>EURUSD, H1</Caption>
              <WindowButtons />
            </TitleBar>
            <ChartArea><H1Chart /></ChartArea>
          </MdiWindow>
        </RightStack>
        <ScrollColumn>
          <ScrollButton $w={20} $h={30} aria-label="Scroll up"><Chevron turn={0} /></ScrollButton>
          <Thumb $grow={789} />
          <Track $grow={62} />
          <ScrollButton $w={20} $h={22} aria-label="Scroll down"><Chevron turn={180} /></ScrollButton>
        </ScrollColumn>
        <ScrollRow>
          <ScrollButton $w={20} $h={20} aria-label="Scroll left"><Chevron turn={-90} /></ScrollButton>
          <Thumb $grow={1957} />
          <Track $grow={29} />
          <ScrollButton $w={22} $h={20} aria-label="Scroll right"><Chevron turn={90} /></ScrollButton>
          <Track $grow={20} />
        </ScrollRow>
      </Workspace>
      <StatusStrip />

      <Panel>
        <PanelHead>
          <IconButton $size={24} aria-label="Settings"><GearIcon /></IconButton>
          <NewShortcut>New shortcut</NewShortcut>
          <IconButton $size={14} aria-label="Minimize panel">
            <svg width="14" height="14" viewBox="0 0 14 14"><path d="M1 12h12" stroke="#333" strokeWidth="1.500" /></svg>
          </IconButton>
          <HeadSpacer />
          <IconButton $size={14} aria-label="Close panel"><CrossIcon size={14} color="#333" /></IconButton>
        </PanelHead>
        <ShortcutCard id="first" risk="2%" sl="30" tp="0" />
        <ShortcutCard id="second" risk="0.01%" sl="0" tp="0" />
      </Panel>
    </Shell>
  );
}
